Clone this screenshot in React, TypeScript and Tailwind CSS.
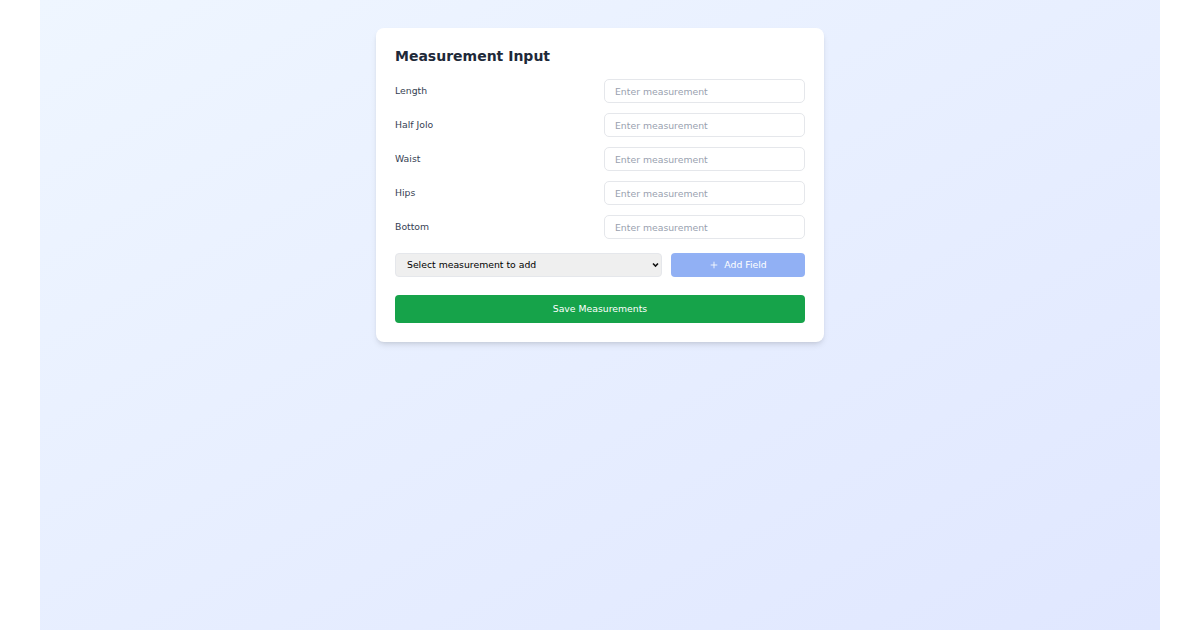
import { Plus } from "lucide-react";

const FIELDS = ["Length", "Half Jolo", "Waist", "Hips", "Bottom"];

export default function App() {
  return (
    <div className="min-h-screen bg-white" style={{ fontFamily: '"DejaVu Sans", sans-serif' }}>
      <div className="mx-10 min-h-[630px] bg-gradient-to-br from-[#eff6ff] to-[#e0e7ff] pt-[28px]">
        <div className="mx-auto w-[448px] rounded-lg bg-white px-[19px] pt-[17px] pb-[19px] shadow-md">
          <h2 className="text-[14px] font-bold leading-[22px] text-gray-800">Measurement Input</h2>

          <div className="mt-[12px] flex flex-col gap-[10px]">
            {FIELDS.map((field) => (
              <div key={field} className="flex items-center justify-between">
                <label className="text-[9.3px] text-gray-700">{field}</label>
                <input
                  type="text"
                  placeholder="Enter measurement"
                  className="h-[24px] w-[201px] rounded-[5px] border border-gray-200 bg-white px-[10px] text-[9.3px] placeholder:text-gray-400 focus:outline-none"
                />
              </div>
            ))}
          </div>

          <div className="mt-[14px] flex items-center gap-[9px]">
            <div className="relative flex h-[24px] flex-1">
              <select className="h-[24px] w-full appearance-none rounded-[4px] border border-gray-200 bg-[#efefef] pl-[11px] pr-[14px] text-[9.3px] text-black">
                <option>Select measurement to add</option>
              </select>
              {/* small native-looking chevron */}
              <svg
                className="pointer-events-none absolute right-[3px] top-1/2 h-[5px] w-[7px] -translate-y-1/2"
                viewBox="0 0 7 5"
                fill="none"
                stroke="#111"
                strokeWidth={1.6}
              >
                <path d="M1 1l2.5 2.5L6 1" />
              </svg>
            </div>
            <button
              disabled
              className="flex h-[24px] w-[134px] items-center justify-center gap-[5px] rounded-[4px] bg-[#2563eb] text-[9.3px] text-white opacity-50"
            >
              <Plus className="h-[10px] w-[10px]" strokeWidth={2} />
              Add Field
            </button>
          </div>

          <button className="mt-[18px] h-[28px] w-full rounded-[4px] bg-[#16a34a] text-[9.3px] text-white">
            Save Measurements
          </button>
        </div>
      </div>
    </div>
  );
}
